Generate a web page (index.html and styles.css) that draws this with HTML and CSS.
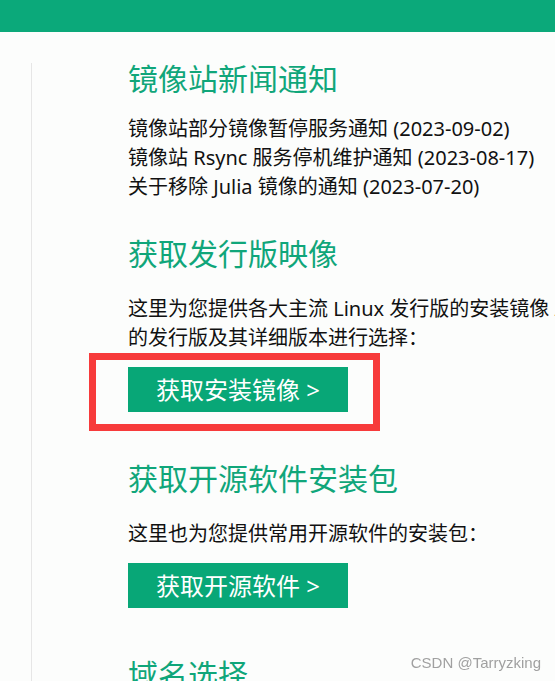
FILE: index.html
```html
<!DOCTYPE html>
<html lang="zh-CN">
<head>
    <meta charset="UTF-8">
    <meta name="viewport" content="width=device-width, initial-scale=1.0">
    <title>镜像站</title>
    <link rel="stylesheet" href="styles.css">
</head>
<body>
    <div class="topbar"></div>
    <div class="main">
        <div class="section">
            <h2>镜像站新闻通知</h2>
            <ul class="news">
                <li><a href="JavaScript:;">镜像站部分镜像暂停服务通知 (2023-09-02)</a></li>
                <li><a href="JavaScript:;">镜像站 Rsync 服务停机维护通知 (2023-08-17)</a></li>
                <li><a href="JavaScript:;">关于移除 Julia 镜像的通知 (2023-07-20)</a></li>
            </ul>
        </div>
        <div class="section">
            <h2>获取发行版映像</h2>
            <p class="intro">这里为您提供各大主流 Linux 发行版的安装镜像 / ISO 文件，请根据需要选择对应<br>的发行版及其详细版本进行选择：</p>
            <div class="btnRow">
                <a class="btn" href="JavaScript:;">获取安装镜像 &gt;</a>
                <span class="mark"></span>
            </div>
        </div>
        <div class="section">
            <h2>获取开源软件安装包</h2>
            <p class="intro">这里也为您提供常用开源软件的安装包：</p>
            <div class="btnRow">
                <a class="btn" href="JavaScript:;">获取开源软件 &gt;</a>
            </div>
        </div>
        <div class="section">
            <h2>域名选择</h2>
            <p class="intro">本站提供多个域名供您选择。</p>
        </div>
    </div>
    <div class="watermark">CSDN @Tarryzking</div>
</body>
</html>
```

FILE: styles.css
```css
html, body {
    overflow: hidden;
}
body {
    margin: 0;
    background-color: #fcfdfc;
    font-family: "Noto Sans", "Noto Sans CJK SC", sans-serif;
    color: #111;
}
/* 顶部绿色条 */
.topbar {
    height: 32px;
    background-color: #0ba97a;
}
/* 内容区, 左侧一条浅灰竖线 */
.main {
    width: 760px;
    margin: 31px 0 0 31px;
    padding-left: 96px;
    border-left: 1px solid #e6e6e6;
}
.section + .section {
    margin-top: 37px;
}
.section h2 {
    margin: 0;
    font-size: 30px;
    font-weight: normal;
    line-height: 32px;
    color: #10a67a;
}
.news {
    list-style: none;
    margin: 19px 0 0;
    padding: 0;
}
.news li, .intro {
    font-size: 20px;
    line-height: 29px;
}
.news a {
    color: #111;
    text-decoration: none;
}
.intro {
    margin: 24px 0 0;
    white-space: nowrap;
}
/* 按钮 */
.btnRow {
    position: relative;
    margin-top: 15px;
    padding-bottom: 14px;
}
.btn {
    display: inline-block;
    height: 45px;
    padding: 0 28px;
    line-height: 45px;
    font-size: 24px;
    color: #fff;
    background-color: #08a777;
    text-decoration: none;
    vertical-align: top;
}
/* 截图上的红框标注 */
.mark {
    position: absolute;
    left: -39px;
    top: -14px;
    width: 291px;
    height: 78px;
    box-sizing: border-box;
    border: 7px solid #f73b3b;
}
.watermark {
    position: fixed;
    right: 14px;
    bottom: 10px;
    font-family: "Liberation Sans", sans-serif;
    font-size: 15px;
    line-height: 17px;
    color: rgba(110, 110, 110, 0.65);
}
```
